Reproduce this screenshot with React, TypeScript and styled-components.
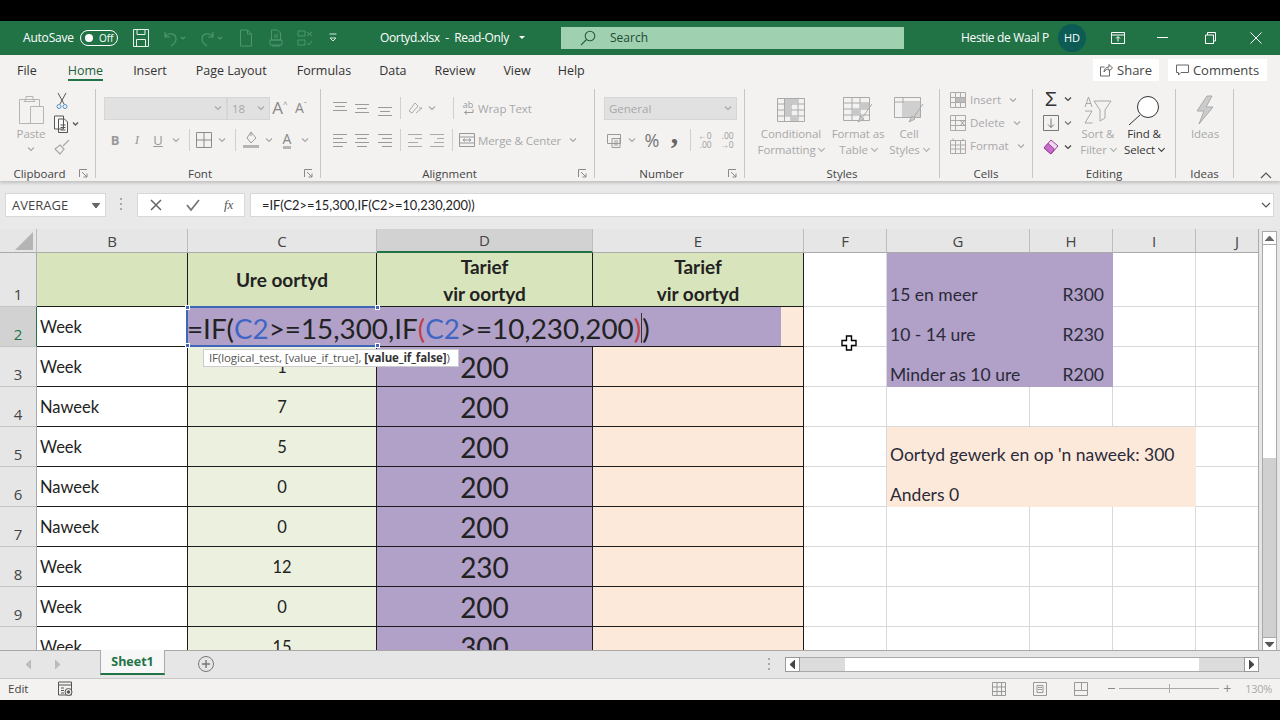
import React from "react";
import styled, { createGlobalStyle } from "styled-components";

const UI = `"Open Sans", "Noto Sans", sans-serif`;
const SHEET = `Lato, "Open Sans", sans-serif`;
const MUTED = "#a8a8a8";
const LABEL = "#444";

const GlobalStyle = createGlobalStyle`
  html, body { margin: 0; padding: 0; background: #000; }
  body { font-family: ${UI}; overflow: hidden; }
  svg { display: block; }
`;

const Ico = ({ w = 16, h = 16, c = MUTED, f = "none", sw = 1, children }: { w?: number; h?: number; c?: string; f?: string; sw?: number; children: React.ReactNode }) => (
  <svg width={w} height={h} viewBox={`0 0 ${w} ${h}`} fill={f} stroke={c} strokeWidth={sw}>
    {children}
  </svg>
);

const Chev = ({ c = MUTED }: { c?: string }) => (
  <Ico w={8} h={6} c={c} sw={1.2}>
    <path d="M1 1.5l3 3 3-3" />
  </Ico>
);

const Lines = ({ rows, c = "#9a9a9a" }: { rows: [number, number, number][]; c?: string }) => (
  <Ico w={18} h={16} c={c}>
    {rows.map(([y, a, b]) => (
      <path key={y} d={`M${a} ${y}.5H${b}`} />
    ))}
  </Ico>
);

const Launcher = () => (
  <Launch>
    <Ico w={9} h={9} c="#888">
      <path d="M.5 8V.5H8M3 3l5 5M8 4.5V8H4.5" />
    </Ico>
  </Launch>
);

export default function App() {
  return (
    <>
      <GlobalStyle />
      <Page>
        <Letterbox $h={21} />
        <TitleBar>
          <AutoSave>AutoSave</AutoSave>
          <Toggle>
            <Knob />
            Off
          </Toggle>
          <QuickIcons>
            <Ico w={16} h={18} c="#e8f2ec">
              <path d="M.5.5h15v17H.5zM4 .5v5h8v-5M3.5 17.5v-7h9v7" />
            </Ico>
            <Ico w={24} h={18} c="#4f9570" sw={1.2}>
              <path d="M3 3v5h5M3 8c3-5 11-4 11 2 0 3-2 5-5 7M19 8l2 2 2-2" />
            </Ico>
            <Ico w={24} h={18} c="#4f9570" sw={1.2}>
              <path d="M14 3v5H9M14 8C11 3 3 4 3 10c0 3 2 5 5 7M19 8l2 2 2-2" />
            </Ico>
            <Ico w={14} h={18} c="#4f9570">
              <path d="M1.5 1h7l4 4v12h-11zM8.5 1v4h4" />
            </Ico>
            <Ico w={14} h={18} c="#4f9570">
              <path d="M2.5 1h6l3 3v7h-9zM1 11h12v5H1zM3 16v1h8v-1M5 6h4M5 8h4" />
            </Ico>
            <Ico w={16} h={18} c="#4f9570">
              <path d="M1 2h7v5H1zM1 11h7v5H1zM10 3l5 4M15 3l-5 4M10 14l2 2 3-4" />
            </Ico>
            <Ico w={10} h={12} c="#d6e8dd">
              <path d="M1.5 2h7M2 6h6l-3 3z" />
            </Ico>
          </QuickIcons>
          <DocTitle>Oortyd.xlsx &nbsp;-&nbsp; Read-Only</DocTitle>
          <TitleCaret />
          <SearchBox>
            <Ico w={16} h={16} c="#245f3e" sw={1.1}>
              <circle cx="10" cy="6" r="4.8" />
              <path d="M6.5 9.5L1 15" />
            </Ico>
            Search
          </SearchBox>
          <UserName>Hestie de Waal P</UserName>
          <Avatar>HD</Avatar>
          <WinButton $left={20}>
            <Ico w={14} h={12} c="#fff">
              <path d="M.5.5h13v11H.5zM.5 3h13M7 9.5V5M5 6.5L7 4.5l2 2" />
            </Ico>
          </WinButton>
          <WinButton $left={20}>
            <Ico w={11} h={2} c="#fff">
              <path d="M0 .5h11" />
            </Ico>
          </WinButton>
          <WinButton $left={24}>
            <Ico w={11} h={12} c="#fff">
              <path d="M.5 3h8v8.5h-8zM2.5 3V.5h8v8.5H8.5" />
            </Ico>
          </WinButton>
          <WinButton $left={22}>
            <Ico w={12} h={12} c="#fff">
              <path d="M.5.5l11 11M11.5.5l-11 11" />
            </Ico>
          </WinButton>
        </TitleBar>

        <Ribbon>
          <TabsRow>
            <TabItem $gap={31}>File</TabItem>
            <TabItem $gap={30} $active>Home</TabItem>
            <TabItem $gap={29}>Insert</TabItem>
            <TabItem $gap={30}>Page Layout</TabItem>
            <TabItem $gap={28}>Formulas</TabItem>
            <TabItem $gap={28}>Data</TabItem>
            <TabItem $gap={28}>Review</TabItem>
            <TabItem $gap={27}>View</TabItem>
            <TabItem $gap={0}>Help</TabItem>
            <ShareButton>
              <Ico w={13} h={14} c="#666">
                <path d="M9.5 7.5v5.5H.5V4h4M4 9c0-3 2-5 5-5V1.5L12.5 5 9 8V6c-2 0-4 1-5 3z" />
              </Ico>
              Share
            </ShareButton>
            <CommentsButton>
              <Ico w={13} h={13} c="#666">
                <path d="M.5 1h12v7.5H5L2.5 11V8.5h-2z" />
              </Ico>
              Comments
            </CommentsButton>
          </TabsRow>

          <Groups>
            <Group $w={96}>
              <Body $pad={14}>
                <Big $w={34}>
                  <BigIcon>
                    <Ico w={28} h={30} c="#b5b5b5">
                      <path d="M2.5 4.5h20v24h-20zM9 4.5V1.5h7v3l2 2H7z" />
                      <path d="M13.5 11.5h13v17h-13z" fill="#f3f2f1" />
                    </Ico>
                  </BigIcon>
                  <BigText>Paste</BigText>
                  <PasteChev><Chev /></PasteChev>
                </Big>
                <SmallColumn $w={32} $top={-2}>
                  <Slot $w={28}>
                    <Ico w={12} h={18} c="#555">
                      <path d="M2 1l6 11M10 1L4 12" />
                      <circle cx="3" cy="14.5" r="2" stroke="#4f93c9" />
                      <circle cx="9" cy="14.5" r="2" stroke="#4f93c9" />
                    </Ico>
                  </Slot>
                  <Slot $w={32}>
                    <Ico w={32} h={18} c="#555">
                      <path d="M6.500 1h9v13h-9zM10.500 4h6l3 3v10.500h-9z" fill="#f8f8f8" />
                      <path d="M12.500 10h5M12.500 12.500h5M12.500 15h5" />
                      <path d="M25 7.500l2.500 2.500L30 7.500" strokeWidth={1.3} />
                    </Ico>
                  </Slot>
                  <Slot $w={28}>
                    <Ico w={16} h={16} c={MUTED} sw={1.2}>
                      <path d="M15 1L9 7M6 6l4 4-4 5-5-5z" />
                    </Ico>
                  </Slot>
                </SmallColumn>
              </Body>
              <Foot>
                <FootText>Clipboard</FootText>
                <Launcher />
              </Foot>
            </Group>

            <Group $w={225}>
              <Rows $pad={8}>
                <Row>
                  <Combo $w={123}><Chev /></Combo>
                  <Combo $w={43}>18<Chev /></Combo>
                  <Slot $w={20}><GrowA $size={17}>A<sup>^</sup></GrowA></Slot>
                  <Slot $w={22}><GrowA $size={14}>A<sup>ˇ</sup></GrowA></Slot>
                </Row>
                <Row>
                  <Slot $w={22}><Glyph $bold>B</Glyph></Slot>
                  <Slot $w={22}><Glyph $italic>I</Glyph></Slot>
                  <Slot $w={20}><Glyph $under>U</Glyph></Slot>
                  <Slot $w={16}><Chev /></Slot>
                  <Slot $w={10}><Sep /></Slot>
                  <Slot $w={20}>
                    <Ico w={16} h={16} c="#8a8a8a">
                      <path d="M.5.5h15v15H.5zM8 .5v15M.5 8h15" />
                    </Ico>
                  </Slot>
                  <Slot $w={16}><Chev /></Slot>
                  <Slot $w={10}><Sep /></Slot>
                  <Slot $w={22}>
                    <Ico w={18} h={18} c="#999">
                      <path d="M9 1l5 6-5 5-4-5zM9 1v4" />
                      <path d="M1 14h16v3H1z" fill="#b5b5b5" stroke="none" />
                    </Ico>
                  </Slot>
                  <Slot $w={14}><Chev /></Slot>
                  <Slot $w={22}>
                    <ColorA>A</ColorA>
                  </Slot>
                  <Slot $w={14}><Chev /></Slot>
                </Row>
              </Rows>
              <Foot>
                <FootText>Font</FootText>
                <Launcher />
              </Foot>
            </Group>

            <Group $w={274}>
              <Rows $pad={8}>
                <Row>
                  <Slot $w={22}><Lines rows={[[2, 2, 16], [6, 4, 14], [10, 2, 16]]} /></Slot>
                  <Slot $w={22}><Lines rows={[[4, 2, 16], [8, 4, 14], [12, 2, 16]]} /></Slot>
                  <Slot $w={23}><Lines rows={[[7, 2, 16], [11, 4, 14], [15, 2, 16]]} /></Slot>
                  <Slot $w={8}><Sep /></Slot>
                  <Slot $w={22}>
                    <Ico w={16} h={16} c="#aaa">
                      <path d="M2 11l6-8 3 3-6 7zM9 13l6-5M15 8l-3 0" />
                    </Ico>
                  </Slot>
                  <Slot $w={12}><Chev /></Slot>
                  <Slot $w={10} />
                  <Slot $w={10}><Sep /></Slot>
                  <Slot $w={20}>
                    <WrapMark>
                      ab
                      <Ico w={12} h={7} c="#999">
                        <path d="M11 .5v3H3M5 1.500L2.500 3.500 5 5.500" />
                      </Ico>
                    </WrapMark>
                  </Slot>
                  <DisabledLabel>Wrap Text</DisabledLabel>
                </Row>
                <Row>
                  <Slot $w={22}><Lines rows={[[2, 2, 16], [6, 2, 12], [10, 2, 16], [14, 2, 12]]} /></Slot>
                  <Slot $w={22}><Lines rows={[[2, 2, 16], [6, 4, 14], [10, 2, 16], [14, 4, 14]]} /></Slot>
                  <Slot $w={23}><Lines rows={[[2, 2, 16], [6, 6, 16], [10, 2, 16], [14, 6, 16]]} /></Slot>
                  <Slot $w={8}><Sep /></Slot>
                  <Slot $w={22}><Lines c="#aaa" rows={[[2, 2, 16], [6, 9, 16], [10, 2, 12], [14, 2, 16]]} /></Slot>
                  <Slot $w={22}><Lines c="#aaa" rows={[[2, 2, 16], [6, 9, 16], [10, 6, 16], [14, 2, 16]]} /></Slot>
                  <Slot $w={8}><Sep /></Slot>
                  <Slot $w={22}>
                    <Ico w={16} h={16} c="#999">
                      <path d="M.5 1.5h15v13H.5zM.5 5h15M.5 11h15M4 8h8M4 8l2-1.5M4 8l2 1.5M12 8l-2-1.5M12 8l-2 1.5" />
                    </Ico>
                  </Slot>
                  <DisabledLabel>Merge &amp; Center</DisabledLabel>
                  <ChevGap><Chev /></ChevGap>
                </Row>
              </Rows>
              <Foot>
                <FootText>Alignment</FootText>
                <Launcher />
              </Foot>
            </Group>

            <Group $w={150}>
              <Rows $pad={9}>
                <Row>
                  <Combo $w={133}>General<Chev /></Combo>
                </Row>
                <Row>
                  <Slot $w={22}>
                    <Ico w={16} h={15} c="#999">
                      <path d="M.5 1.5h13v9H.5zM5 5.5h8v9H5z" />
                      <path d="M7 8h4M7 10h4M7 12h4" />
                    </Ico>
                  </Slot>
                  <Slot $w={12}><Chev /></Slot>
                  <Slot $w={3} />
                  <Slot $w={22}><Percent>%</Percent></Slot>
                  <Slot $w={23}><Comma>,</Comma></Slot>
                  <Slot $w={8}><Sep /></Slot>
                  <Slot $w={22}><Decimal>←0<br />.00</Decimal></Slot>
                  <Slot $w={22}><Decimal>.00<br />→0</Decimal></Slot>
                </Row>
              </Rows>
              <Foot>
                <FootText>Number</FootText>
                <Launcher />
              </Foot>
            </Group>

            <Group $w={195}>
              <Body $pad={7}>
                <Big $w={78}>
                  <BigIcon>
                    <Ico w={28} h={24} c="#aaa">
                      <path d="M.5.5h27v23H.5zM7.5.5v23M14 .5v23M21 .5v23M.5 6h27M.5 12h27M.5 18h27" />
                      <path d="M8 1h13v5H8zM8 6h6v6H8zM8 12h6v6H8zM14 18h7v5h-7z" fill="#c8c8c8" stroke="none" />
                    </Ico>
                  </BigIcon>
                  <BigText>Conditional<br />Formatting <InlineChev /></BigText>
                </Big>
                <Big $w={56}>
                  <BigIcon>
                    <Ico w={30} h={26} c="#aaa">
                      <path d="M.5.5h26v23H.5zM9 .5v23M17 .5v23M.5 6h26M.5 12h26M.5 18h26" />
                      <path d="M17 6h9v6h-9zM9 12h8v6H9z" fill="#c8c8c8" stroke="none" />
                      <path d="M29 7L19 21M18 19l3 3-6 3z" fill="#ccc" />
                    </Ico>
                  </BigIcon>
                  <BigText>Format as<br />Table <InlineChev /></BigText>
                </Big>
                <Big $w={46}>
                  <BigIcon>
                    <Ico w={30} h={26} c="#aaa">
                      <path d="M.5.5h26v20H.5zM.5 5h26M9 .5v20" />
                      <path d="M9 6h17v14H9z" fill="#cfcfcf" stroke="none" />
                      <path d="M29 7L19 21M18 19l3 3-6 3z" fill="#ccc" />
                    </Ico>
                  </BigIcon>
                  <BigText>Cell<br />Styles <InlineChev /></BigText>
                </Big>
              </Body>
              <Foot>
                <FootText>Styles</FootText>
              </Foot>
            </Group>

            <Group $w={93}>
              <CellsBody>
                <CellsRow>
                  <Ico w={16} h={16} c="#aaa">
                    <path d="M.5.5h15v15H.5zM.5 5.5h15M.5 10.5h15M5.5.5v15M10.5.5v15" />
                    <path d="M6 6h9v4H6z" fill="#bbb" stroke="none" />
                  </Ico>
                  Insert <Chev />
                </CellsRow>
                <CellsRow>
                  <Ico w={16} h={16} c="#aaa">
                    <path d="M.5.5h15v15H.5zM.5 5.5h15M.5 10.5h15M5.5.5v15" />
                    <path d="M10 5l5 6M15 5l-5 6" stroke="#999" />
                  </Ico>
                  Delete <Chev />
                </CellsRow>
                <CellsRow>
                  <Ico w={16} h={16} c="#aaa">
                    <path d="M.5 2.5h15v13H.5zM.5 7h15M.5 11h15M5.5 2.5v13M10.5 2.5v13M3 .5v2M13 .5v2" />
                  </Ico>
                  Format <Chev />
                </CellsRow>
              </CellsBody>
              <Foot>
                <FootText>Cells</FootText>
              </Foot>
            </Group>

            <Group $w={143}>
              <Body $pad={10}>
                <SmallColumn $w={35} $top={-5}>
                  <IconChev>
                    <SigmaMark>Σ</SigmaMark>
                    <Chev c="#444" />
                  </IconChev>
                  <IconChev>
                    <Ico w={16} h={16} c="#777">
                      <path d="M.5.5h15v15H.5zM8 3.5v9M5 9.5l3 3 3-3" />
                    </Ico>
                    <Chev c="#777" />
                  </IconChev>
                  <IconChev>
                    <Ico w={16} h={16} c="#9a3d9a">
                      <path d="M1 9l7-8 7 6-7 8z" fill="#f0d8f0" />
                      <path d="M1 9l4-4.6 6.5 5.8L8 15z" fill="#c86dc8" />
                    </Ico>
                    <Chev c="#444" />
                  </IconChev>
                </SmallColumn>
                <Big $w={40}>
                  <BigIcon>
                    <Ico w={30} h={30} c={MUTED}>
                      <path d="M2 12l3.5-10L9 12M3 8.5h5M2 16h7l-7 12h7.5" />
                      <path d="M11 6h17l-6 9v8l-5 3V15z" />
                    </Ico>
                  </BigIcon>
                  <BigText>Sort &amp;<br />Filter <InlineChev /></BigText>
                </Big>
                <Big $w={52}>
                  <BigIcon>
                    <Ico w={34} h={30} c="#333">
                      <circle cx="21" cy="12" r="10.5" fill="#fff" />
                      <path d="M13 20L2 30" />
                    </Ico>
                  </BigIcon>
                  <DarkText>Find &amp;<br />Select <InlineChev $dark /></DarkText>
                </Big>
              </Body>
              <Foot>
                <FootText>Editing</FootText>
              </Foot>
            </Group>

            <Group $w={58}>
              <Body $pad={0}>
                <Big $w={58}>
                  <BigIcon>
                    <Ico w={22} h={30} c="#aaa" f="#ccc">
                      <path d="M13 1L3 16h7l-5 13 14-17h-7l6-11z" />
                    </Ico>
                  </BigIcon>
                  <BigText>Ideas</BigText>
                </Big>
              </Body>
              <Foot>
                <FootText>Ideas</FootText>
              </Foot>
            </Group>
            <Collapse>
              <Ico w={12} h={7} c="#555" sw={1.2}>
                <path d="M1 6l5-5 5 5" />
              </Ico>
            </Collapse>
          </Groups>
        </Ribbon>

        <FormulaBar>
          <NameBox>
            AVERAGE
            <Ico w={8} h={5} c="#666" f="#666">
              <path d="M0 0h8L4 5z" />
            </Ico>
          </NameBox>
          <GripDots />
          <FxBox>
            <Ico w={12} h={12} c="#666" sw={1.5}>
              <path d="M1 1l10 10M11 1L1 11" />
            </Ico>
            <Ico w={14} h={12} c="#777" sw={1.8}>
              <path d="M1 6l4 5 8-10" />
            </Ico>
            <FxMark>fx</FxMark>
          </FxBox>
          <FormulaInput>
            =IF(C2&gt;=15,300,IF(C2&gt;=10,230,200))
            <Ico w={10} h={6} c="#555" sw={1.2}>
              <path d="M1 1l4 4 4-4" />
            </Ico>
          </FormulaInput>
        </FormulaBar>

        <SheetArea>
          <Grid>
            <Corner>
              <Ico w={18} h={18} c="none" f="#b4b4b4">
                <path d="M18 0v18H0z" />
              </Ico>
            </Corner>
            {["B", "C", "D", "E", "F", "G", "H", "I", "J"].map((l) => (
              <ColHead key={l} $active={l === "D"}>{l}</ColHead>
            ))}
            {sheetRows.map((r) => (
              <React.Fragment key={r.n}>
                <RowHead $active={r.n === 2}>{r.n}</RowHead>
                <TableCell $fill={r.n === 1 ? GREEN : "#fff"} $first>
                  {r.b}
                </TableCell>
                <TableCell $fill={r.n === 1 ? GREEN : LIGHT_GREEN} $center $bold={r.n === 1}>
                  {r.c}
                </TableCell>
                <TableCell $fill={r.n === 1 ? GREEN : PURPLE} $center $bold={r.n === 1} $big={r.n > 2}>
                  {r.d}
                </TableCell>
                <TableCell $fill={r.n === 1 ? GREEN : PEACH} $center $bold={r.n === 1}>
                  {r.e}
                </TableCell>
                <PlainCell />
                {r.n <= 3 ? (
                  <>
                    <SideCell $fill={PURPLE}>{r.g}</SideCell>
                    <SideCell $fill={PURPLE} $right>{r.h}</SideCell>
                    <PlainCell />
                  </>
                ) : r.n === 5 || r.n === 6 ? (
                  <SideCell $fill={PEACH} $span={3}>{r.g}</SideCell>
                ) : (
                  <>
                    <PlainCell />
                    <PlainCell />
                    <PlainCell />
                  </>
                )}
                <PlainCell />
              </React.Fragment>
            ))}
            <RangeBox>
              <Handle $x="left" $y="top" />
              <Handle $x="right" $y="top" />
              <Handle $x="left" $y="bottom" />
              <Handle $x="right" $y="bottom" />
            </RangeBox>
            <Editor>
              =IF(<RefBlue>C2</RefBlue>&gt;=15,300,IF<RefRed>(</RefRed><RefBlue>C2</RefBlue>&gt;=10,230,200<RefRed>)</RefRed>
              <Caret />)
            </Editor>
            <Tip>
              IF(logical_test, [value_if_true], <b>[value_if_false]</b>)
            </Tip>
            <CursorMark>
              <Ico w={16} h={16} c="#000" f="#fff" sw={1.4}>
                <path d="M5.5 1h5v4.5H15v5h-4.5V15h-5v-4.5H1v-5h4.5z" />
              </Ico>
            </CursorMark>
          </Grid>
          <VScroll>
            <ScrollBtn>
              <Ico w={9} h={5} c="#666" f="#666">
                <path d="M0 5h9L4.5 0z" />
              </Ico>
            </ScrollBtn>
            <VThumb />
            <ScrollBtn>
              <Ico w={9} h={5} c="#555" f="#555">
                <path d="M0 0h9L4.5 5z" />
              </Ico>
            </ScrollBtn>
          </VScroll>
        </SheetArea>

        <SheetTabs>
          <NavArrows>
            <Ico w={5} h={9} c="#bbb" f="#bbb"><path d="M5 0v9L0 4.5z" /></Ico>
            <Ico w={5} h={9} c="#bbb" f="#bbb"><path d="M0 0v9l5-4.5z" /></Ico>
          </NavArrows>
          <SheetTab>Sheet1</SheetTab>
          <AddSheet>
            <Ico w={16} h={16} c="#777">
              <circle cx="8" cy="8" r="7.5" />
              <path d="M8 4v8M4 8h8" strokeWidth={1.4} />
            </Ico>
          </AddSheet>
          <HScroll>
            <ScrollDots />
            <HBtn>
              <Ico w={5} h={9} c="#444" f="#444"><path d="M5 0v9L0 4.5z" /></Ico>
            </HBtn>
            <HThumb />
            <HBtn>
              <Ico w={5} h={9} c="#444" f="#444"><path d="M0 0v9l5-4.5z" /></Ico>
            </HBtn>
          </HScroll>
        </SheetTabs>

        <StatusBar>
          <StatusText>Edit</StatusText>
          <Ico w={15} h={16} c="#555">
            <path d="M.5 1h13v13H.5zM.5 4h13M3 7h3M3 9.5h3M3 12h3" />
            <circle cx="10.5" cy="11" r="3.5" fill="#f3f2f1" />
            <circle cx="10.5" cy="11" r="1.3" fill="#555" />
          </Ico>
          <ViewIcons>
            <Ico w={14} h={14} c="#999">
              <path d="M.5.5h13v13H.5zM.5 5h13M.5 9.5h13M5 .5v13M9.5.5v13" />
            </Ico>
            <Ico w={14} h={14} c="#999">
              <path d="M.5.5h13v13H.5zM4 3.5h6v7H4zM5 5.5h4M5 7.5h4" />
            </Ico>
            <Ico w={14} h={14} c="#999">
              <path d="M.5.5h13v13H.5zM.5 8.5h7V.5M7.5 8.5h6" />
            </Ico>
          </ViewIcons>
          <ZoomMinus />
          <ZoomTrack><ZoomTick /></ZoomTrack>
          <ZoomPlus>+</ZoomPlus>
          <ZoomValue>130%</ZoomValue>
        </StatusBar>
        <Letterbox $h={20} />
      </Page>
    </>
  );
}

const GREEN = "#d8e4bc";
const LIGHT_GREEN = "#ebf1de";
const PURPLE = "#b1a0c7";
const PEACH = "#fde9d9";

type SheetRow = { n: number; b?: string; c?: React.ReactNode; d?: React.ReactNode; e?: React.ReactNode; g?: string; h?: string };

const sheetRows: SheetRow[] = [
  { n: 1, c: "Ure oortyd", d: <>Tarief<br />vir oortyd</>, e: <>Tarief<br />vir oortyd</>, g: "15 en meer", h: "R300" },
  { n: 2, b: "Week", g: "10 - 14 ure", h: "R230" },
  { n: 3, b: "Week", c: "1", d: "200", g: "Minder as 10 ure", h: "R200" },
  { n: 4, b: "Naweek", c: "7", d: "200" },
  { n: 5, b: "Week", c: "5", d: "200", g: "Oortyd gewerk en op 'n naweek: 300" },
  { n: 6, b: "Naweek", c: "0", d: "200", g: "Anders 0" },
  { n: 7, b: "Naweek", c: "0", d: "200" },
  { n: 8, b: "Week", c: "12", d: "230" },
  { n: 9, b: "Week", c: "0", d: "200" },
  { n: 10, b: "Week", c: "15", d: "300" },
];

const Page = styled.div`
  width: 1280px;
  height: 720px;
  display: flex;
  flex-direction: column;
  overflow: hidden;
  background: #000;
`;

const Letterbox = styled.div<{ $h: number }>`
  height: ${(p) => p.$h}px;
  flex: none;
  background: #000;
`;

const TitleBar = styled.header`
  height: 34px;
  flex: none;
  box-sizing: border-box;
  display: flex;
  align-items: center;
  padding: 0 0 1px 23px;
  background: #217346;
  color: #fff;
  font-size: 12px;
`;

const AutoSave = styled.span`
  width: 57px;
  letter-spacing: -0.2px;
`;

const Toggle = styled.div`
  width: 38px;
  height: 16px;
  box-sizing: border-box;
  border: 1px solid #fff;
  border-radius: 9px;
  display: flex;
  align-items: center;
  gap: 6px;
  padding-left: 4px;
  font-size: 10px;
`;

const Knob = styled.span`
  width: 8px;
  height: 8px;
  border-radius: 50%;
  background: #fff;
`;

const QuickIcons = styled.div`
  display: flex;
  align-items: center;
  gap: 13px;
  margin-left: 15px;
  width: 225px;

  svg:nth-child(4),
  svg:nth-child(5) {
    margin-left: 3px;
  }
  svg:nth-child(6) {
    margin-left: 1px;
  }
  svg:nth-child(7) {
    margin-left: 2px;
  }
`;

const DocTitle = styled.span`
  margin-left: 22px;
  width: 134px;
  white-space: nowrap;
  letter-spacing: -0.35px;
`;

const TitleCaret = styled.span`
  width: 0;
  height: 0;
  margin-left: 5px;
  border: 3px solid transparent;
  border-top-color: #fff;
  border-bottom: 0;
`;

const SearchBox = styled.div`
  width: 343px;
  height: 22px;
  margin-left: 36px;
  box-sizing: border-box;
  padding-left: 19px;
  display: flex;
  align-items: center;
  gap: 14px;
  background: #9fd0b0;
  color: #1e4a33;
  font-size: 12px;
`;

const UserName = styled.span`
  margin-left: 57px;
  width: 92px;
  white-space: nowrap;
  letter-spacing: -0.35px;
`;

const Avatar = styled.div`
  width: 28px;
  height: 28px;
  margin-left: 5px;
  border-radius: 50%;
  background: #0c5c55;
  display: flex;
  align-items: center;
  justify-content: center;
  font-size: 11px;
`;

const WinButton = styled.div<{ $left: number }>`
  margin-left: ${(p) => p.$left}px;
  width: 24px;
  display: flex;
  justify-content: center;
`;

const Ribbon = styled.section`
  height: 126px;
  flex: none;
  display: flex;
  flex-direction: column;
  background: #f3f2f1;
  color: ${LABEL};
  box-shadow: 0 2px 3px rgba(0, 0, 0, 0.18);
  position: relative;
  z-index: 1;
`;

const TabsRow = styled.nav`
  height: 32px;
  flex: none;
  box-sizing: border-box;
  display: flex;
  align-items: center;
  padding: 0 0 2px 17px;
  font-size: 12.5px;
`;

const TabItem = styled.span<{ $gap: number; $active?: boolean }>`
  position: relative;
  margin-right: ${(p) => p.$gap}px;
  color: ${(p) => (p.$active ? "#1f5e3a" : "#333")};

  &::after {
    content: "";
    display: ${(p) => (p.$active ? "block" : "none")};
    position: absolute;
    left: 0;
    right: 0;
    bottom: -2px;
    height: 2px;
    background: #217346;
  }
`;

const ShareButton = styled.button`
  margin-left: auto;
  width: 66px;
  height: 22px;
  border: 0;
  background: #fff;
  display: flex;
  align-items: center;
  justify-content: center;
  gap: 4px;
  padding: 0;
  font: 13px ${UI};
  color: #444;
`;

const CommentsButton = styled(ShareButton)`
  margin-left: 9px;
  margin-right: 13px;
  width: 99px;
`;

const Groups = styled.div`
  flex: 1;
  display: flex;
  min-height: 0;
`;

const Group = styled.div<{ $w: number }>`
  width: ${(p) => p.$w}px;
  flex: none;
  box-sizing: border-box;
  margin: 2px 0 3px;
  border-right: 1px solid #c6c6c6;
  display: flex;
  flex-direction: column;
`;

const Body = styled.div<{ $pad: number }>`
  flex: 1;
  display: flex;
  padding: 4px 0 0 ${(p) => p.$pad}px;
  min-height: 0;
`;

const Big = styled.div<{ $w: number }>`
  width: ${(p) => p.$w}px;
  flex: none;
  display: flex;
  flex-direction: column;
  align-items: center;
`;

const BigIcon = styled.div`
  height: 34px;
  display: flex;
  align-items: center;
  justify-content: center;
`;

const BigText = styled.div`
  margin-top: -1px;
  font-size: 11.5px;
  line-height: 16px;
  letter-spacing: -0.1px;
  text-align: center;
  white-space: nowrap;
  color: ${MUTED};
`;

const DarkText = styled(BigText)`
  color: #333;
`;

const PasteChev = styled.div`
  margin-top: 4px;
`;

const InlineChev = styled.span<{ $dark?: boolean }>`
  display: inline-block;
  width: 4px;
  height: 4px;
  margin: 0 0 3px 1px;
  border-right: 1px solid ${(p) => (p.$dark ? "#333" : MUTED)};
  border-bottom: 1px solid ${(p) => (p.$dark ? "#333" : MUTED)};
  transform: rotate(45deg);
`;

const SmallColumn = styled.div<{ $w: number; $top: number }>`
  width: ${(p) => p.$w}px;
  flex: none;
  display: flex;
  flex-direction: column;
  justify-content: flex-start;
  gap: 3px;
  margin-top: ${(p) => p.$top}px;
`;

const Slot = styled.div<{ $w: number }>`
  width: ${(p) => p.$w}px;
  flex: none;
  min-height: 20px;
  display: flex;
  align-items: center;
  justify-content: center;
`;

const Rows = styled.div<{ $pad: number }>`
  flex: 1;
  display: flex;
  flex-direction: column;
  gap: 6px;
  padding: 6px 0 0 ${(p) => p.$pad}px;
  min-height: 0;
`;

const Row = styled.div`
  height: 26px;
  display: flex;
  align-items: center;
`;

const Combo = styled.div<{ $w: number }>`
  width: ${(p) => p.$w}px;
  height: 23px;
  box-sizing: border-box;
  flex: none;
  display: flex;
  align-items: center;
  justify-content: space-between;
  padding: 0 4px;
  background: #e1e1e1;
  border: 1px solid #d6d6d6;
  font-size: 11.5px;
  color: ${MUTED};

  svg:only-child {
    margin-left: auto;
  }
`;

const GrowA = styled.span<{ $size: number }>`
  font-size: ${(p) => p.$size}px;
  color: #888;
  line-height: 18px;

  sup {
    font-size: 8px;
    line-height: 0;
  }
`;

const Glyph = styled.span<{ $bold?: boolean; $italic?: boolean; $under?: boolean }>`
  font-family: ${(p) => (p.$italic ? `"Liberation Serif", serif` : UI)};
  font-size: 13px;
  font-weight: ${(p) => (p.$bold ? 700 : 400)};
  font-style: ${(p) => (p.$italic ? "italic" : "normal")};
  text-decoration: ${(p) => (p.$under ? "underline" : "none")};
  color: #999;
`;

const ColorA = styled.span`
  font-size: 14px;
  line-height: 15px;
  color: #888;
  border-bottom: 3px solid #b5b5b5;
`;

const Sep = styled.span`
  width: 1px;
  height: 22px;
  background: #d0d0d0;
`;

const WrapMark = styled.span`
  display: flex;
  flex-direction: column;
  align-items: center;
  width: 14px;
  font-size: 9px;
  line-height: 9px;
  color: #999;
`;

const DisabledLabel = styled.span`
  font-size: 11.5px;
  color: ${MUTED};
  white-space: nowrap;
  letter-spacing: -0.1px;
`;

const ChevGap = styled.span`
  margin-left: 8px;
`;

const Percent = styled.span`
  font-size: 18px;
  color: #777;
`;

const Comma = styled.span`
  font: 700 30px/20px "Liberation Serif", serif;
  color: #666;
  margin-top: -14px;
`;

const Decimal = styled.span`
  font-size: 8.5px;
  line-height: 9px;
  text-align: right;
  color: #999;
`;

const CellsBody = styled.div`
  flex: 1;
  display: flex;
  flex-direction: column;
  margin-top: -1px;
  padding-left: 10px;
  min-height: 0;
`;

const CellsRow = styled.div`
  height: 23px;
  display: flex;
  align-items: center;
  gap: 4px;
  font-size: 11.5px;
  color: ${MUTED};

  svg:last-child {
    margin-left: 4px;
  }
`;

const IconChev = styled.div`
  height: 21px;
  display: flex;
  align-items: center;
  gap: 5px;
`;

const SigmaMark = styled.span`
  width: 16px;
  text-align: center;
  font: 20px/20px "Liberation Sans", sans-serif;
  color: #333;
`;

const Foot = styled.div`
  display: flex;
  height: 16px;
  margin-bottom: -3px;
  align-items: center;
`;

const FootText = styled.span`
  flex: 1;
  text-align: center;
  font-size: 11.5px;
  color: ${LABEL};
`;

const Launch = styled.span`
  width: 16px;
  flex: none;
`;

const Collapse = styled.div`
  margin: auto 0 2px 26px;
`;

const FormulaBar = styled.div`
  height: 48px;
  flex: none;
  box-sizing: border-box;
  padding-top: 12px;
  display: flex;
  align-items: flex-start;
  background: #e9e9e9;
`;

const NameBox = styled.div`
  width: 101px;
  height: 24px;
  box-sizing: border-box;
  margin-left: 5px;
  padding: 0 5px 0 6px;
  display: flex;
  align-items: center;
  justify-content: space-between;
  background: #fff;
  border: 1px solid #d8d8d8;
  font-size: 13px;
  color: #444;
`;

const GripDots = styled.span`
  width: 2px;
  height: 14px;
  margin: 5px 15px 0 14px;
  background: repeating-linear-gradient(#aaa 0 2px, transparent 2px 5px);
`;

const FxBox = styled.div`
  width: 108px;
  height: 24px;
  box-sizing: border-box;
  display: flex;
  align-items: center;
  gap: 24px;
  padding-left: 12px;
  background: #fff;
  border: 1px solid #d8d8d8;
`;

const FxMark = styled.i`
  font: italic 13px "Liberation Serif", serif;
  color: #555;
`;

const FormulaInput = styled.div`
  width: 1024px;
  height: 24px;
  box-sizing: border-box;
  margin-left: 5px;
  padding: 0 2px 0 11px;
  display: flex;
  align-items: center;
  justify-content: space-between;
  background: #fff;
  border: 1px solid #d8d8d8;
  font: 12.85px ${SHEET};
  color: #222;
`;

const SheetArea = styled.main`
  height: 421px;
  flex: none;
  display: flex;
  background: #e6e6e6;
`;

const Grid = styled.div`
  position: relative;
  width: 1259px;
  height: 421px;
  box-sizing: border-box;
  flex: none;
  overflow: hidden;
  display: grid;
  grid-template-columns: 37px 151px 189px 216px 211px 83px 143px 83px 83px 83px;
  grid-template-rows: 24px 54px repeat(9, 40px);
  background: #fff;
  border-right: 1px solid #aaa;
  font-family: ${SHEET};
  color: #222;
`;

const Corner = styled.div`
  background: #e6e6e6;
  border-right: 1px solid #bbb;
  border-bottom: 1px solid #aaa;
  box-sizing: border-box;
  padding: 3px 0 0 15px;
`;

const ColHead = styled.div<{ $active?: boolean }>`
  box-sizing: border-box;
  display: flex;
  align-items: center;
  justify-content: center;
  background: ${(p) => (p.$active ? "#d2d2d2" : "#e6e6e6")};
  border-right: 1px solid #bdbdbd;
  border-bottom: ${(p) => (p.$active ? "2px solid #217346" : "1px solid #aaa")};
  font: 15px ${UI};
  color: #444;
`;

const RowHead = styled.div<{ $active?: boolean }>`
  box-sizing: border-box;
  display: flex;
  align-items: flex-end;
  justify-content: center;
  padding: 0 0 2px 0;
  background: ${(p) => (p.$active ? "#d2d2d2" : "#e6e6e6")};
  color: ${(p) => (p.$active ? "#217346" : "#444")};
  border-right: 1px solid ${(p) => (p.$active ? "#217346" : "#aaa")};
  border-bottom: 1px solid #c4c4c4;
  font: 15px ${UI};
`;

const TableCell = styled.div<{ $fill: string; $center?: boolean; $bold?: boolean; $big?: boolean; $first?: boolean }>`
  box-sizing: border-box;
  display: flex;
  align-items: center;
  justify-content: ${(p) => (p.$center ? "center" : "flex-start")};
  padding: ${(p) => (p.$bold ? 0 : 1)}px 0 0 ${(p) => (p.$first ? 3 : 0)}px;
  text-align: center;
  white-space: nowrap;
  background: ${(p) => p.$fill};
  border-right: 1px solid #1c1c1c;
  border-bottom: 1px solid #1c1c1c;
  font-size: ${(p) => (p.$big ? 28 : p.$bold ? 19 : 16.5)}px;
  font-weight: ${(p) => (p.$bold ? 700 : 400)};
  line-height: ${(p) => (p.$bold ? 27 : 22)}px;
`;

const PlainCell = styled.div`
  box-sizing: border-box;
  background: #fff;
  border-right: 1px solid #d9d9d9;
  border-bottom: 1px solid #d9d9d9;
`;

const SideCell = styled.div<{ $fill: string; $right?: boolean; $span?: number }>`
  grid-column: span ${(p) => p.$span ?? 1};
  box-sizing: border-box;
  display: flex;
  align-items: flex-end;
  justify-content: ${(p) => (p.$right ? "flex-end" : "flex-start")};
  padding: 0 ${(p) => (p.$right ? 9 : 0)}px 1px ${(p) => (p.$right ? 0 : 3)}px;
  white-space: nowrap;
  background: ${(p) => p.$fill};
  font-size: 17.5px;
  line-height: 22px;
  color: #2a2a3a;
`;

const Editor = styled.div`
  position: absolute;
  left: 187px;
  top: 78px;
  width: 594px;
  height: 39px;
  box-sizing: border-box;
  padding-top: 3px;
  display: flex;
  align-items: center;
  background: ${PURPLE};
  font-size: 27.8px;
  white-space: pre;
  color: #222;
`;

const RefBlue = styled.span`
  color: #3f66c4;
`;

const RefRed = styled.span`
  color: #c0404a;
`;

const Caret = styled.span`
  width: 1px;
  height: 30px;
  background: #333;
`;

const RangeBox = styled.div`
  position: absolute;
  left: 186px;
  top: 77px;
  width: 191px;
  height: 41px;
  border: solid #3f66b8;
  border-width: 2px 0 2px 2px;
  box-sizing: border-box;
  z-index: 2;
`;

const Handle = styled.span<{ $x: "left" | "right"; $y: "top" | "bottom" }>`
  position: absolute;
  ${(p) => p.$x}: -3px;
  ${(p) => p.$y}: -3px;
  width: 5px;
  height: 5px;
  background: #3f66b8;
  border: 1px solid #fff;
  box-sizing: border-box;
`;

const Tip = styled.div`
  position: absolute;
  left: 203px;
  top: 120px;
  width: 256px;
  height: 18px;
  box-sizing: border-box;
  padding-left: 5px;
  background: #fff;
  border: 1px solid #ccc;
  font: 11.5px/16px ${UI};
  letter-spacing: -0.1px;
  white-space: nowrap;
  color: #555;
  z-index: 3;

  b {
    color: #333;
  }
`;

const CursorMark = styled.div`
  position: absolute;
  left: 841px;
  top: 106px;
  z-index: 3;
`;

const VScroll = styled.div`
  flex: 1;
  display: flex;
  flex-direction: column;
  align-items: center;
  padding: 2px 0 0 0;
`;

const ScrollBtn = styled.div`
  width: 15px;
  height: 14px;
  flex: none;
  box-sizing: border-box;
  display: flex;
  align-items: center;
  justify-content: center;
  background: #fff;
  border: 1px solid #aaa;
`;

const VThumb = styled.div`
  width: 15px;
  height: 392px;
  flex: none;
  box-sizing: border-box;
  background: linear-gradient(#fff 0 213px, #d0d0d0 213px);
  border-left: 1px solid #aaa;
  border-right: 1px solid #aaa;
`;

const SheetTabs = styled.div`
  height: 28px;
  flex: none;
  box-sizing: border-box;
  display: flex;
  align-items: flex-start;
  background: #e6e6e6;
  border-top: 1px solid #a8a8a8;
`;

const NavArrows = styled.div`
  width: 100px;
  box-sizing: border-box;
  padding: 9px 0 0 26px;
  display: flex;
  gap: 24px;
`;

const SheetTab = styled.div`
  width: 65px;
  height: 25px;
  box-sizing: border-box;
  margin-top: -1px;
  display: flex;
  align-items: center;
  justify-content: center;
  background: #f7f7f7;
  border-left: 1px solid #aaa;
  border-right: 1px solid #aaa;
  border-bottom: 2px solid #217346;
  font-size: 12.5px;
  font-weight: 700;
  color: #217346;
`;

const AddSheet = styled.div`
  margin: 5px 0 0 33px;
`;

const HScroll = styled.div`
  margin-left: auto;
  margin-right: 21px;
  padding-top: 6px;
  display: flex;
  align-items: center;
`;

const ScrollDots = styled.span`
  width: 2px;
  height: 14px;
  margin-right: 15px;
  background: repeating-linear-gradient(#aaa 0 2px, transparent 2px 5px);
`;

const HBtn = styled.div`
  width: 15px;
  height: 15px;
  box-sizing: border-box;
  display: flex;
  align-items: center;
  justify-content: center;
  background: #fff;
  border: 1px solid #999;
`;

const HThumb = styled.div`
  width: 444px;
  height: 15px;
  box-sizing: border-box;
  background: linear-gradient(90deg, #dcdcdc 0 45px, #fff 45px 399px, #dcdcdc 399px);
  border-top: 1px solid #aaa;
  border-bottom: 1px solid #aaa;
`;

const StatusBar = styled.footer`
  height: 22px;
  flex: none;
  box-sizing: border-box;
  display: flex;
  align-items: center;
  padding: 0 8px 2px 8px;
  background: #f3f2f1;
  border-top: 1px solid #c8c8c8;
  font-size: 11.5px;
  color: #444;
`;

const StatusText = styled.span`
  width: 50px;
`;

const ViewIcons = styled.div`
  margin-left: auto;
  display: flex;
  gap: 27px;
`;

const ZoomMinus = styled.span`
  width: 7px;
  height: 1px;
  margin-left: 20px;
  background: #888;
`;

const ZoomTrack = styled.span`
  position: relative;
  width: 100px;
  height: 1px;
  margin-left: 4px;
  background: #aaa;
`;

const ZoomTick = styled.span`
  position: absolute;
  left: 50px;
  top: -4px;
  width: 1px;
  height: 9px;
  background: #aaa;
`;

const ZoomPlus = styled.span`
  margin-left: 4px;
  font-size: 14px;
  color: #888;
`;

const ZoomValue = styled.span`
  margin-left: 14px;
  font-size: 11px;
  letter-spacing: -0.3px;
  color: #aaa;
`;
